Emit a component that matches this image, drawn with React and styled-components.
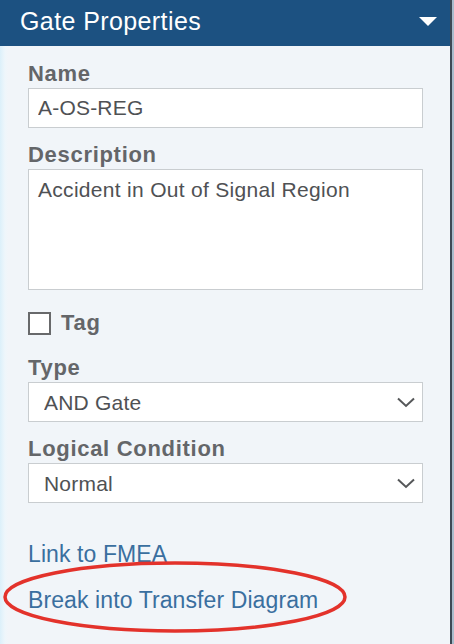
import React from 'react'
import styled, { createGlobalStyle } from 'styled-components'

const GlobalStyle = createGlobalStyle`
  html, body {
    margin: 0;
    padding: 0;
    background: #a9bdcc;
  }
  body {
    font-family: "Liberation Sans", Arial, Helvetica, sans-serif;
  }
`

const Panel = styled.div`
  width: 452px;
  height: 644px;
  box-sizing: border-box;
  background: linear-gradient(to right, #dcf0fa 0px, #eef6fb 5px, #f1f5f9 8px);
  border-right: 2px solid #3d4a55;
  overflow: hidden;
`

const Header = styled.div`
  display: flex;
  align-items: flex-start;
  justify-content: space-between;
  height: 46px;
  box-sizing: border-box;
  padding: 8px 13px 0 20px;
  background: #1c5181;
  color: #ffffff;
`

const Title = styled.h2`
  margin: 0;
  font-size: 25px;
  line-height: 27px;
  font-weight: normal;
  letter-spacing: 0.4px;
`

const Caret = styled.svg`
  margin-top: 9px;
  width: 18px;
  height: 9px;
`

const Body = styled.div`
  display: flex;
  flex-direction: column;
  padding: 15px 27px 0 28px;
`

const Label = styled.label`
  display: block;
  margin-top: ${p => p.$gap || 0}px;
  font-size: 22px;
  line-height: 26px;
  font-weight: bold;
  color: #646669;
  letter-spacing: 0.7px;
`

const TextInput = styled.input`
  display: block;
  width: 100%;
  height: 40px;
  box-sizing: border-box;
  margin: 1px 0 0;
  padding: 0 9px;
  border: 1px solid #c9cdd0;
  background: #ffffff;
  font-family: inherit;
  font-size: 21px;
  color: #4f5154;
  letter-spacing: 0.2px;
  outline: none;
`

const TextArea = styled.textarea`
  display: block;
  width: 100%;
  height: 121px;
  box-sizing: border-box;
  margin: 1px 0 0;
  padding: 8px 9px;
  border: 1px solid #c9cdd0;
  background: #ffffff;
  font-family: inherit;
  font-size: 21px;
  line-height: 24px;
  color: #4f5154;
  letter-spacing: 0.3px;
  resize: none;
  outline: none;
`

const CheckRow = styled.label`
  display: flex;
  align-items: center;
  gap: 10px;
  margin-top: 20px;
  font-size: 22px;
  line-height: 26px;
  font-weight: bold;
  color: #646669;
  letter-spacing: 0.7px;
`

const Box = styled.span`
  display: block;
  width: 23px;
  height: 23px;
  box-sizing: border-box;
  border: 2px solid #68696b;
  background: #ffffff;
`

const SelectWrap = styled.div`
  position: relative;
  margin-top: 1px;
`

const Select = styled.select`
  display: block;
  width: 100%;
  height: 40px;
  box-sizing: border-box;
  padding: 0 40px 0 15px;
  border: 1px solid #c9cdd0;
  border-radius: 0;
  background: #ffffff;
  appearance: none;
  font-family: inherit;
  font-size: 21px;
  color: #4f5154;
  letter-spacing: 0.2px;
  outline: none;
`

const Chevron = styled.svg`
  position: absolute;
  right: 8px;
  top: 15px;
  width: 18px;
  height: 11px;
  pointer-events: none;
`

const Links = styled.div`
  display: flex;
  flex-direction: column;
  gap: 20px;
  margin-top: 38px;
`

const Link = styled.a`
  display: block;
  position: relative;
  font-size: 23px;
  line-height: 26px;
  color: #3a6f9f;
  text-decoration: none;
  letter-spacing: 0.1px;
  cursor: pointer;
`

const Circle = styled.svg`
  position: absolute;
  left: -25px;
  top: -26px;
  width: 345px;
  height: 72px;
  overflow: visible;
  pointer-events: none;
`

const ChevronIcon = () => (
  <Chevron viewBox="0 0 18 11">
    <path d="M1 1.5 L9 9 L17 1.5" fill="none" stroke="#555759" strokeWidth="2" />
  </Chevron>
)

const Dropdown = ({ value, options }) => (
  <SelectWrap>
    <Select defaultValue={value}>
      {options.map(o => (
        <option key={o}>{o}</option>
      ))}
    </Select>
    <ChevronIcon />
  </SelectWrap>
)

export default function App() {
  return (
    <>
      <GlobalStyle />
      <Panel>
        <Header>
          <Title>Gate Properties</Title>
          <Caret viewBox="0 0 18 9">
            <path d="M0 0 H18 L9 9 Z" fill="#ffffff" />
          </Caret>
        </Header>
        <Body>
          <Label>Name</Label>
          <TextInput defaultValue="A-OS-REG" />

          <Label $gap={14}>Description</Label>
          <TextArea defaultValue="Accident in Out of Signal Region" />

          <CheckRow>
            <Box />
            Tag
          </CheckRow>

          <Label $gap={19}>Type</Label>
          <Dropdown value="AND Gate" options={['AND Gate', 'OR Gate']} />

          <Label $gap={14}>Logical Condition</Label>
          <Dropdown value="Normal" options={['Normal', 'Inverted']} />

          <Links>
            <Link>Link to FMEA</Link>
            <Link>
              Break into Transfer Diagram
              <Circle viewBox="0 0 345 72">
                <ellipse cx="172" cy="36" rx="170" ry="34" fill="none" stroke="#e3322b" strokeWidth="3.5" />
              </Circle>
            </Link>
          </Links>
        </Body>
      </Panel>
    </>
  )
}
